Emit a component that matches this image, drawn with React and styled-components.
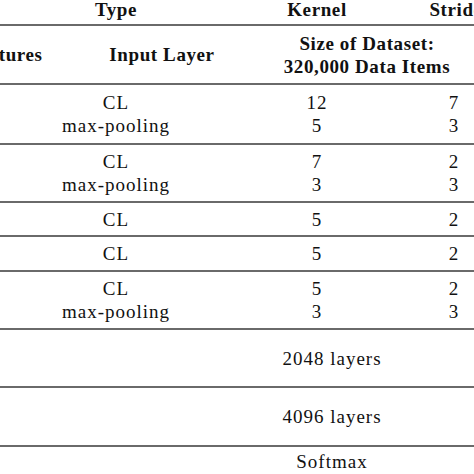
import React from "react";
import styled, { createGlobalStyle } from "styled-components";

const GlobalStyle = createGlobalStyle`
  html, body {
    margin: 0;
    padding: 0;
    background: #ffffff;
    overflow: hidden;
  }
`;

// column layouts (table coords, table is pulled 60px left of the page)
const BODY_COLS = "82px 188px 214px 60px";
const HEAD_COLS = "82px 188px 214px 64px";
const SUB_COLS = "130px 184px 226px";
const WIDE_COLS = "82px 620px";

const header = ["", "Type", "Kernel", "Stride"];
const subHeader = ["Features", "Input Layer", ["Size of Dataset:", "320,000 Data Items"]];

const layers = [
  { h: 58, cells: ["", ["CL", "max-pooling"], ["12", "5"], ["7", "3"]] },
  { h: 56, cells: ["", ["CL", "max-pooling"], ["7", "3"], ["2", "3"]] },
  { h: 32, cells: ["", "CL", "5", "2"] },
  { h: 33, cells: ["", "CL", "5", "2"] },
  { h: 56, cells: ["", ["CL", "max-pooling"], ["5", "3"], ["2", "3"]] },
];

const dense = [
  { h: 56, text: "2048 layers" },
  { h: 57, text: "4096 layers" },
];

const Frame = styled.div`
  width: 474px;
  height: 474px;
  overflow: hidden;
  font-family: "Liberation Serif", "Times New Roman", serif;
  color: #111111;
`;

const Table = styled.div`
  width: 620px;
  margin-left: -60px;
`;

const Row = styled.div`
  display: grid;
  grid-template-columns: ${(p) => p.$cols};
  align-items: ${(p) => (p.$top ? "start" : "center")};
  height: ${(p) => (p.$h ? `${p.$h}px` : "auto")};
  padding-top: ${(p) => p.$pt || 0}px;
  border-bottom: ${(p) => (p.$last ? "none" : "2px solid #6a6a6a")};
`;

const Cell = styled.div`
  text-align: center;
  white-space: nowrap;
  font-size: 19px;
  line-height: ${(p) => (p.$tight ? "19px" : "23px")};
  font-weight: ${(p) => (p.$bold ? 700 : 400)};
  letter-spacing: ${(p) => (p.$bold ? "0.6px" : "1px")};
`;

const Line = styled.div``;

const renderCell = (value, key, bold, tight) => (
  <Cell key={key} $bold={bold} $tight={tight}>
    {Array.isArray(value)
      ? value.map((line, i) => <Line key={i}>{line}</Line>)
      : value}
  </Cell>
);

const App = () => {
  return (
    <Frame>
      <GlobalStyle />
      <Table>
        {/* header */}
        <Row $cols={HEAD_COLS} $h={24} $top>
          {header.map((c, i) => renderCell(c, i, true, true))}
        </Row>
        <Row $cols={SUB_COLS} $h={57}>
          {subHeader.map((c, i) => renderCell(c, i, true))}
        </Row>

        {/* conv layers */}
        {layers.map((row, r) => (
          <Row key={r} $cols={BODY_COLS} $h={row.h}>
            {row.cells.map((c, i) => renderCell(c, i, false))}
          </Row>
        ))}

        {/* fully connected */}
        {dense.map((row, r) => (
          <Row key={r} $cols={WIDE_COLS} $h={row.h}>
            {renderCell("", 0, false)}
            {renderCell(row.text, 1, false)}
          </Row>
        ))}

        <Row $cols={WIDE_COLS} $pt={3} $top $last>
          {renderCell("", 0, false)}
          {renderCell("Softmax", 1, false)}
        </Row>
      </Table>
    </Frame>
  );
};

export default App;
